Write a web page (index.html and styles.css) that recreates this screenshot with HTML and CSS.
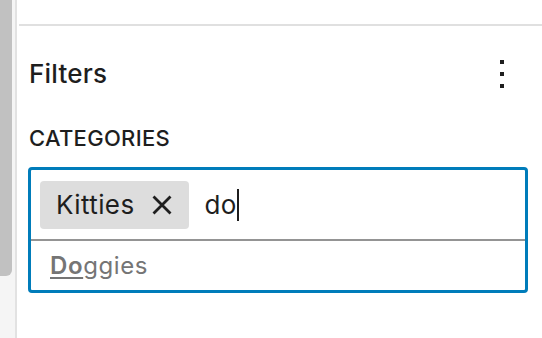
FILE: index.html
```html
<!DOCTYPE html>
<html lang="en">
<head>
<meta charset="utf-8">
<title>Filters</title>
<link rel="stylesheet" href="styles.css">
</head>
<body>
<div class="app">
  <div class="track"><div class="thumb"></div></div>
  <div class="vline"></div>
  <div class="panel">
    <div class="panel-top"></div>
    <div class="panel-body">
      <div class="header">
        <h2 class="title">Filters</h2>
        <button class="menu" aria-label="Options">
          <svg width="4" height="28" viewBox="0 0 4 28"><rect x="0" y="0" width="4" height="4"/><rect x="0" y="12" width="4" height="4"/><rect x="0" y="24" width="4" height="4"/></svg>
        </button>
      </div>
      <div class="label">CATEGORIES</div>
      <div class="token-field">
        <div class="input-row">
          <span class="token">
            <span class="token-text">Kitties</span>
            <svg class="token-x" width="20" height="20" viewBox="0 0 20 20"><path d="M1.5 1.5 L18.5 18.5 M18.5 1.5 L1.5 18.5"/></svg>
          </span>
          <span class="typed">do</span><span class="caret"></span>
        </div>
        <ul class="suggestions">
          <li class="suggestion"><strong class="match">Do</strong>ggies</li>
        </ul>
      </div>
    </div>
  </div>
</div>
</body>
</html>
```

FILE: styles.css
```css
html, body {
  margin: 0;
  padding: 0;
  background: #ffffff;
}
body {
  width: 542px;
  height: 338px;
  overflow: hidden;
  font-family: "Inter", "Noto Sans", sans-serif;
  color: #1e1e1e;
}
.app {
  display: flex;
  height: 338px;
}
.track {
  width: 15px;
  flex: none;
  background: #f5f5f5;
}
.thumb {
  width: 12px;
  height: 276px;
  background: #c1c1c1;
  border-bottom-right-radius: 6px;
}
.vline {
  width: 2px;
  flex: none;
  background: #e2e2e2;
}
.panel {
  flex: 1;
  margin-left: 2px;
}
.panel-top {
  height: 24px;
  border-bottom: 2px solid #e0e0e0;
}
.panel-body {
  padding: 32px 14px 0 9px;
}
.header {
  display: flex;
  align-items: center;
  justify-content: space-between;
  height: 32px;
}
.title {
  margin: 0;
  padding-left: 1px;
  font-size: 26px;
  line-height: 32px;
  font-weight: 500;
  letter-spacing: 0.2px;
}
.menu {
  border: 0;
  padding: 0;
  margin: 0 24px 0 0;
  background: none;
  width: 4px;
  height: 28px;
  display: flex;
}
.menu svg {
  fill: #1e1e1e;
}
.label {
  margin-top: 34px;
  padding-left: 1px;
  font-size: 22px;
  line-height: 28px;
  font-weight: 500;
  letter-spacing: 0.3px;
}
.token-field {
  margin-top: 15px;
  border: 3px solid #007cba;
  border-radius: 4px;
}
.input-row {
  display: flex;
  align-items: center;
  padding: 11px 9px 10px;
}
.token {
  display: flex;
  align-items: center;
  height: 48px;
  padding: 0 17px 0 16px;
  background: #dddddd;
  border-radius: 4px;
  gap: 17px;
}
.token-text {
  font-size: 26px;
  line-height: 30px;
  letter-spacing: 0.4px;
}
.token-x {
  stroke: #1e1e1e;
  stroke-width: 2.8;
  fill: none;
}
.typed {
  margin-left: 16px;
  font-size: 26px;
  line-height: 30px;
  letter-spacing: 0.4px;
}
.caret {
  width: 2px;
  height: 32px;
  background: #1e1e1e;
}
.suggestions {
  list-style: none;
  margin: 0;
  padding: 0;
  border-top: 2px solid #949494;
}
.suggestion {
  height: 49px;
  line-height: 49px;
  padding: 0 19px;
  font-size: 24px;
  letter-spacing: 0.6px;
  color: #757575;
}
.match {
  font-weight: 600;
  text-decoration: underline;
  text-decoration-thickness: 2px;
  text-underline-offset: 3px;
}
```
